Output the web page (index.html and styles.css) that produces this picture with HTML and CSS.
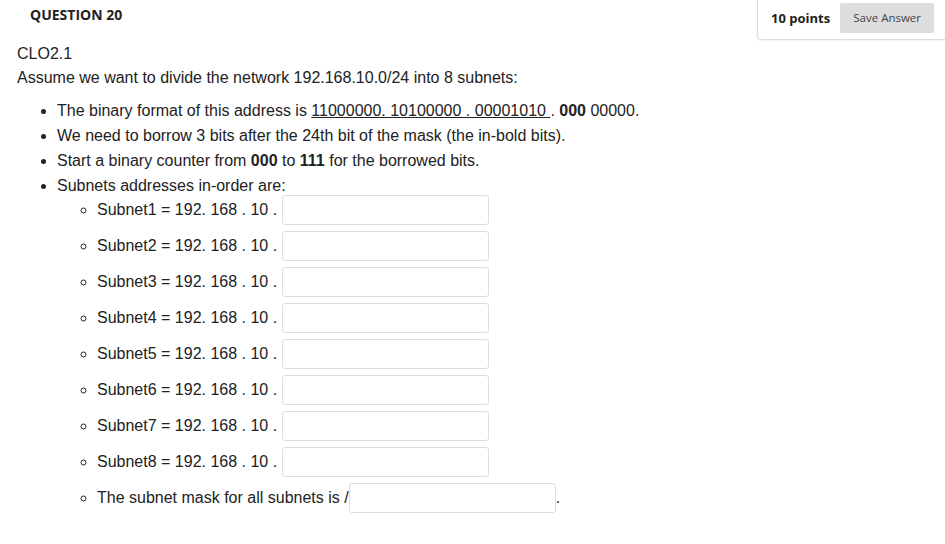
FILE: index.html
```html
<!DOCTYPE html>
<html>
<head>
<meta charset="utf-8">
<link rel="stylesheet" href="styles.css">
</head>
<body>
<div class="header">
  <h3 class="qtitle">QUESTION 20</h3>
  <div class="points-box">
    <span class="points">10 points</span>
    <button class="save">Save Answer</button>
  </div>
</div>
<div class="body">
  <p class="line">CLO2.1</p>
  <p class="line">Assume we want to divide the network 192.168.10.0/24 into 8 subnets:</p>
  <ul class="outer">
    <li>The binary format of this address is <u>11000000. 10100000 . 00001010 </u>. <b>000</b> 00000.</li>
    <li>We need to borrow 3 bits after the 24th bit of the mask (the in-bold bits).</li>
    <li>Start a binary counter from <b>000</b> to <b>111</b> for the borrowed bits.</li>
    <li>Subnets addresses in-order are:
      <ul class="inner">
        <li>Subnet1 = 192. 168 . 10 . <input class="blank" type="text"></li>
        <li>Subnet2 = 192. 168 . 10 . <input class="blank" type="text"></li>
        <li>Subnet3 = 192. 168 . 10 . <input class="blank" type="text"></li>
        <li>Subnet4 = 192. 168 . 10 . <input class="blank" type="text"></li>
        <li>Subnet5 = 192. 168 . 10 . <input class="blank" type="text"></li>
        <li>Subnet6 = 192. 168 . 10 . <input class="blank" type="text"></li>
        <li>Subnet7 = 192. 168 . 10 . <input class="blank" type="text"></li>
        <li>Subnet8 = 192. 168 . 10 . <input class="blank" type="text"></li>
        <li>The subnet mask for all subnets is /<input class="blank" type="text">.</li>
      </ul>
    </li>
  </ul>
</div>
</body>
</html>
```
FILE: styles.css
```css
html, body {
  margin: 0;
  padding: 0;
  background: #fff;
}
body {
  font-family: "Liberation Sans", Arial, sans-serif;
  color: #222;
}
.header {
  display: flex;
  justify-content: space-between;
  align-items: flex-start;
  height: 41px;
}
.qtitle {
  margin: 0;
  padding: 6px 0 0 30px;
  font-family: "Open Sans", sans-serif;
  font-weight: 700;
  font-size: 14px;
  line-height: 18px;
  color: #222;
}
.points-box {
  display: flex;
  align-items: center;
  gap: 10px;
  height: 40px;
  box-sizing: border-box;
  padding: 0 12px 4px 13px;
  width: 200px;
  border-left: 1px solid #ddd;
  border-bottom: 1px solid #ddd;
  border-bottom-left-radius: 4px;
  box-shadow: 0 1px 2px rgba(0,0,0,0.06);
  margin-right: -12px;
}
.points {
  font-family: "Open Sans", sans-serif;
  font-weight: 700;
  font-size: 13px;
  color: #222;
}
.save {
  font-family: "Open Sans", sans-serif;
  font-size: 11.5px;
  color: #444;
  background: #ddd;
  border: none;
  border-radius: 2px;
  height: 30px;
  width: 94px;
  padding: 0;
}
.body {
  padding: 0 0 0 17px;
  font-size: 16px;
}
.line {
  margin: 0;
  line-height: 24px;
}
.body .line:first-child {
  margin-top: 1px;
}
.outer {
  margin: 8px 0 0 0;
  padding-left: 40px;
  line-height: 25px;
  list-style: disc;
}
.inner {
  margin: -6px 0 0 0;
  padding-left: 40px;
  list-style: circle;
}
.inner li {
  line-height: 36px;
  height: 36px;
}
.blank {
  box-sizing: border-box;
  width: 207px;
  height: 30px;
  border: 1px solid #ddd;
  border-radius: 3px;
  vertical-align: middle;
  margin: 0;
  padding: 0 6px;
  background: #fff;
}
.inner li .blank {
  position: relative;
  top: -1px;
}
```
